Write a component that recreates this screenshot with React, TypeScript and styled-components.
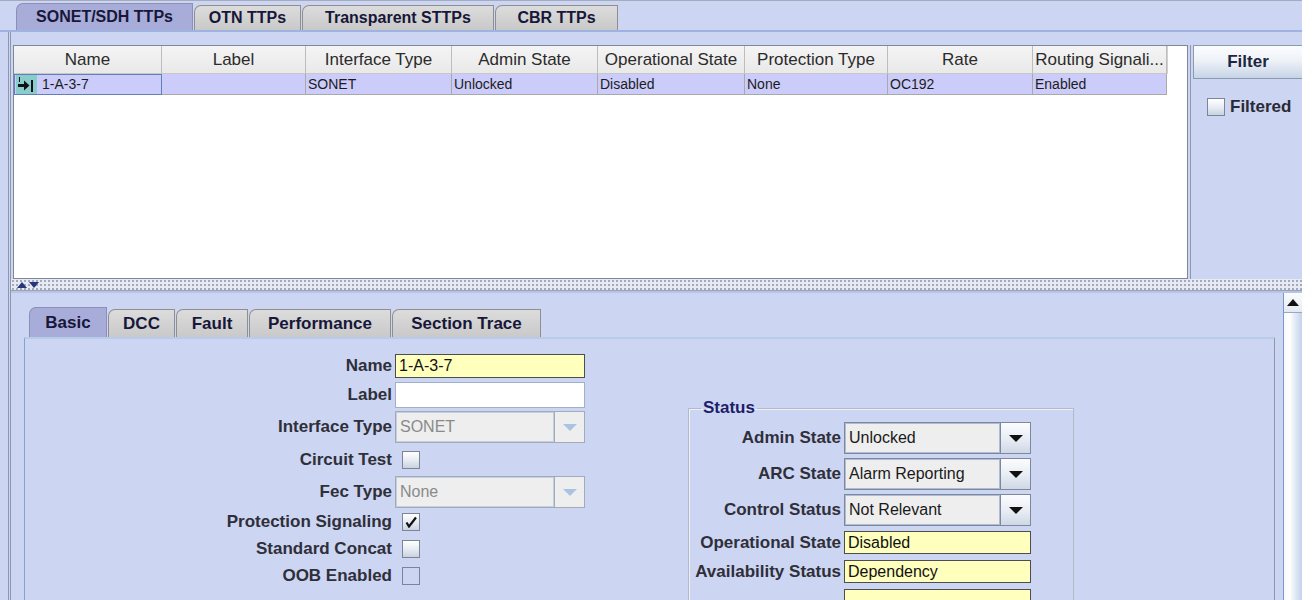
import React from "react";
import styled, { createGlobalStyle } from "styled-components";

const GlobalStyle = createGlobalStyle`
  html, body { margin: 0; padding: 0; background: #ffffff; }
  body { font-family: "Liberation Sans", Arial, sans-serif; }
  * { box-sizing: border-box; }
`;

const Frame = styled.div`
  width: 1302px;
  height: 600px;
  overflow: hidden;
  background: #ccd5f1;
  display: flex;
  flex-direction: column;
  border-top: 1px solid #a3abbd;
`;

const TopTabBar = styled.div`
  height: 31px;
  flex: none;
  display: flex;
  align-items: flex-end;
  padding-left: 16px;
  border-bottom: 2px solid #9fb2e0;
`;

const Tab = styled.div<{ $active?: boolean; $w: number; $size: number; $h: number }>`
  width: ${(p) => p.$w}px;
  height: ${(p) => (p.$active ? p.$h : p.$h - 2)}px;
  display: flex;
  align-items: center;
  justify-content: center;
  font-weight: 700;
  font-size: ${(p) => p.$size}px;
  color: #17173a;
  background: ${(p) =>
    p.$active ? "#a8acd9" : "linear-gradient(#dcdcdc, #c9c9c9)"};
  border: 1px solid ${(p) => (p.$active ? "#8c90b8" : "#8f8f8f")};
  border-bottom: none;
  border-top-left-radius: 7px;
  margin-right: 1px;
  white-space: nowrap;
`;

const TabBody = styled.div`
  flex: 1;
  display: flex;
  flex-direction: column;
  margin-left: 8px;
  padding-top: 13px;
  border-left: 3px double #8d97ae;
  min-height: 0;
`;

const UpperPane = styled.div`
  height: 234px;
  flex: none;
  display: flex;
`;

const TableScroll = styled.div`
  flex: 1;
  margin-left: 2px;
  background: #ffffff;
  border: 1px solid #7d889f;
  overflow: hidden;
`;

const TableGrid = styled.div<{ $cols: string }>`
  display: grid;
  grid-template-columns: ${(p) => p.$cols};
`;

const HeadCell = styled.div`
  height: 28px;
  display: flex;
  align-items: center;
  justify-content: center;
  font-size: 17px;
  color: #2b2b2b;
  background: linear-gradient(#f4f4f4, #e9e9e9);
  border-right: 1px solid #bdbdbd;
  border-bottom: 1px solid #c8c8c8;
  white-space: nowrap;
  overflow: hidden;
`;

const HeadFill = styled.div`
  height: 28px;
  background: #ffffff;
  border-left: 1px solid #d0d0d0;
`;

const RowCell = styled.div<{ $focus?: boolean }>`
  height: 21px;
  display: flex;
  align-items: center;
  gap: 5px;
  padding-left: 2px;
  font-size: 14px;
  color: #1c1c1c;
  background: #ccccfa;
  border-right: 1px solid #a9a9a9;
  border-bottom: 1px solid #a9a9a9;
  outline: ${(p) => (p.$focus ? "1px solid #6280b8" : "none")};
  outline-offset: -1px;
  white-space: nowrap;
`;

const RowFill = styled.div`
  height: 21px;
`;

const FilterPanel = styled.div`
  width: 112px;
  flex: none;
  border-left: 1px solid #8e98ae;
  margin-left: 2px;
  display: flex;
  flex-direction: column;
  padding-left: 2px;
`;

const FilterButton = styled.div`
  height: 34px;
  display: flex;
  align-items: center;
  justify-content: center;
  font-weight: 700;
  font-size: 17px;
  color: #1d2740;
  background: linear-gradient(#fbfcfe, #eef2f8 45%, #c7d4e6);
  border: 1px solid #8b9ab1;
  border-right: none;
`;

const CheckRow = styled.div`
  display: flex;
  align-items: center;
  gap: 5px;
  margin: 18px 0 0 14px;
  font-weight: 700;
  font-size: 17px;
  color: #2a2a36;
`;

const CheckBox = styled.div<{ $flat?: boolean }>`
  width: 18px;
  height: 18px;
  flex: none;
  display: flex;
  align-items: center;
  justify-content: center;
  border: 1px solid #7c8596;
  background: ${(p) =>
    p.$flat ? "#ccd5f1" : "linear-gradient(#ffffff, #e8edf4 50%, #c9d2df)"};
`;

const Divider = styled.div`
  height: 12px;
  flex: none;
  display: flex;
  align-items: center;
  gap: 2px;
  padding-left: 6px;
  background-color: #e7eaf2;
  background-image: radial-gradient(circle, #a3aabb 0.9px, transparent 1.2px);
  background-size: 4px 4px;
  border-bottom: 1px solid #9aa3b6;
`;

const Arrow = styled.div<{ $down?: boolean }>`
  width: 0;
  height: 0;
  border-left: 5px solid transparent;
  border-right: 5px solid transparent;
  ${(p) =>
    p.$down
      ? "border-top: 6px solid #27357a;"
      : "border-bottom: 6px solid #27357a;"}
`;

const LowerPane = styled.div`
  flex: 1;
  display: flex;
  min-height: 0;
  border-top: 2px solid #b7c4e6;
`;

const DetailArea = styled.div`
  flex: 1;
  display: flex;
  flex-direction: column;
  padding: 9px 8px 0 13px;
`;

const InnerTabBar = styled.div`
  display: flex;
  align-items: flex-end;
  padding-left: 5px;
  height: 35px;
  flex: none;
`;

const InnerBody = styled.div`
  flex: 1;
  display: flex;
  align-items: flex-start;
  padding: 12px 0 0 167px;
  border-top: 2px solid #b9cbeb;
  border-left: 1px solid #87a0d2;
  border-right: 1px solid #8f98a8;
`;

const FormGrid = styled.div<{ $rows: string; $cols: string }>`
  display: grid;
  grid-template-columns: ${(p) => p.$cols};
  grid-template-rows: ${(p) => p.$rows};
  column-gap: 3px;
  align-items: center;
`;

const FieldLabel = styled.div`
  justify-self: end;
  font-weight: 700;
  font-size: 17px;
  color: #2f2f3a;
  white-space: nowrap;
`;

const TextField = styled.div<{ $yellow?: boolean; $h: number }>`
  height: ${(p) => p.$h}px;
  display: flex;
  align-items: center;
  padding-left: 3px;
  font-size: 16px;
  color: #111;
  background: ${(p) => (p.$yellow ? "#ffffbe" : "#ffffff")};
  border: 1px solid ${(p) => (p.$yellow ? "#4d4d4d" : "#9fb0c8")};
`;

const Combo = styled.div<{ $disabled?: boolean }>`
  height: 32px;
  display: flex;
  border: 1px solid ${(p) => (p.$disabled ? "#a2abba" : "#7d889c")};
  background: #eeeeee;
`;

const ComboText = styled.div<{ $disabled?: boolean }>`
  flex: 1;
  display: flex;
  align-items: center;
  padding-left: 3px;
  font-size: 16px;
  color: ${(p) => (p.$disabled ? "#8a8a8a" : "#1a1a1a")};
  border: 1px solid ${(p) => (p.$disabled ? "#c3cede" : "#aebdd4")};
`;

const ComboButton = styled.div<{ $disabled?: boolean }>`
  width: 30px;
  flex: none;
  display: flex;
  align-items: center;
  justify-content: center;
  border-left: 1px solid ${(p) => (p.$disabled ? "#a2abba" : "#7d889c")};
  background: ${(p) =>
    p.$disabled ? "#eeeeee" : "linear-gradient(#fbfcfe, #e9eef5 50%, #cfd8e5)"};
`;

const ComboTriangle = styled.div<{ $disabled?: boolean }>`
  width: 0;
  height: 0;
  border-left: 7px solid transparent;
  border-right: 7px solid transparent;
  border-top: 7px solid ${(p) => (p.$disabled ? "#a9c4e2" : "#111")};
`;

const CheckCell = styled.div`
  padding-left: 7px;
`;

const StatusSet = styled.fieldset`
  margin: 48px 0 0 103px;
  padding: 3px 42px 0 5px;
  width: 386px;
  border: 1px solid #b3b9c9;
  box-shadow: inset 1px 1px 0 #eef0f7;
  min-height: 300px;
`;

const Legend = styled.legend`
  padding: 0 2px;
  margin-left: 7px;
  font-weight: 700;
  font-size: 17px;
  line-height: 18px;
  color: #1e1f6b;
`;

const VScroll = styled.div`
  width: 19px;
  flex: none;
  display: flex;
  flex-direction: column;
  border-left: 1px solid #7b96c8;
  background: linear-gradient(to right, #f6f9fe, #ffffff 30%, #dfe8f5 65%, #c3d3ea);
`;

const ScrollButton = styled.div`
  height: 20px;
  flex: none;
  display: flex;
  align-items: center;
  justify-content: center;
  background: linear-gradient(#fbfcfe, #e4e9f1);
  border-bottom: 1px solid #9aa9c2;
`;

const UpTriangle = styled.div`
  width: 0;
  height: 0;
  border-left: 6px solid transparent;
  border-right: 6px solid transparent;
  border-bottom: 7px solid #111;
`;

const RowIcon = () => (
  <svg width="21" height="19" viewBox="0 0 21 19">
    <rect x="0" y="0" width="21" height="19" fill="#88cccc" />
    <rect x="3" y="2" width="1" height="5" fill="#111" />
    <polygon points="2,9 8,9 8,5.5 13.5,10.5 8,15.5 8,12 2,12" fill="#111" />
    <rect x="15" y="5" width="2" height="12" fill="#111" />
  </svg>
);

const CheckMark = () => (
  <svg width="12" height="12" viewBox="0 0 12 12">
    <path d="M1.5 6.5 L4 10.5 L11 1.5" stroke="#111" strokeWidth="2.2" fill="none" />
  </svg>
);

const columns = [
  { title: "Name", w: 148 },
  { title: "Label", w: 144 },
  { title: "Interface Type", w: 146 },
  { title: "Admin State", w: 146 },
  { title: "Operational State", w: 147 },
  { title: "Protection Type", w: 143 },
  { title: "Rate", w: 145 },
  { title: "Routing Signali...", w: 134 },
];

const rowValues = ["1-A-3-7", "", "SONET", "Unlocked", "Disabled", "None", "OC192", "Enabled"];

const topTabs = [
  { label: "SONET/SDH TTPs", w: 177 },
  { label: "OTN TTPs", w: 107 },
  { label: "Transparent STTPs", w: 192 },
  { label: "CBR TTPs", w: 123 },
];

const innerTabs = [
  { label: "Basic", w: 78 },
  { label: "DCC", w: 67 },
  { label: "Fault", w: 72 },
  { label: "Performance", w: 142 },
  { label: "Section Trace", w: 149 },
];

const ComboBox = ({ value, disabled }: { value: string; disabled?: boolean }) => (
  <Combo $disabled={disabled}>
    <ComboText $disabled={disabled}>{value}</ComboText>
    <ComboButton $disabled={disabled}>
      <ComboTriangle $disabled={disabled} />
    </ComboButton>
  </Combo>
);

export default function App() {
  const colTemplate = columns.map((c) => `${c.w}px`).join(" ") + " 1fr";
  return (
    <>
      <GlobalStyle />
      <Frame>
        <TopTabBar>
          {topTabs.map((t, i) => (
            <Tab key={t.label} $active={i === 0} $w={t.w} $size={16} $h={27}>
              {t.label}
            </Tab>
          ))}
        </TopTabBar>
        <TabBody>
          <UpperPane>
            <TableScroll>
              <TableGrid $cols={colTemplate}>
                {columns.map((c) => (
                  <HeadCell key={c.title}>{c.title}</HeadCell>
                ))}
                <HeadFill />
                {rowValues.map((v, i) => (
                  <RowCell key={i} $focus={i === 0}>
                    {i === 0 && <RowIcon />}
                    {v}
                  </RowCell>
                ))}
                <RowFill />
              </TableGrid>
            </TableScroll>
            <FilterPanel>
              <FilterButton>Filter</FilterButton>
              <CheckRow>
                <CheckBox />
                Filtered
              </CheckRow>
            </FilterPanel>
          </UpperPane>
          <Divider>
            <Arrow />
            <Arrow $down />
          </Divider>
          <LowerPane>
            <DetailArea>
              <InnerTabBar>
                {innerTabs.map((t, i) => (
                  <Tab key={t.label} $active={i === 0} $w={t.w} $size={17} $h={30}>
                    {t.label}
                  </Tab>
                ))}
              </InnerTabBar>
              <InnerBody>
                <FormGrid
                  $cols="200px 190px"
                  $rows="29px 30px 34px 32px 32px 27px 27px 27px"
                >
                  <FieldLabel>Name</FieldLabel>
                  <TextField $yellow $h={24}>1-A-3-7</TextField>
                  <FieldLabel>Label</FieldLabel>
                  <TextField $h={26} />
                  <FieldLabel>Interface Type</FieldLabel>
                  <ComboBox value="SONET" disabled />
                  <FieldLabel>Circuit Test</FieldLabel>
                  <CheckCell>
                    <CheckBox />
                  </CheckCell>
                  <FieldLabel>Fec Type</FieldLabel>
                  <ComboBox value="None" disabled />
                  <FieldLabel>Protection Signaling</FieldLabel>
                  <CheckCell>
                    <CheckBox>
                      <CheckMark />
                    </CheckBox>
                  </CheckCell>
                  <FieldLabel>Standard Concat</FieldLabel>
                  <CheckCell>
                    <CheckBox />
                  </CheckCell>
                  <FieldLabel>OOB Enabled</FieldLabel>
                  <CheckCell>
                    <CheckBox $flat />
                  </CheckCell>
                </FormGrid>
                <StatusSet>
                  <Legend>Status</Legend>
                  <FormGrid $cols="147px 187px" $rows="36px 36px 36px 29px 29px 29px">
                    <FieldLabel>Admin State</FieldLabel>
                    <ComboBox value="Unlocked" />
                    <FieldLabel>ARC State</FieldLabel>
                    <ComboBox value="Alarm Reporting" />
                    <FieldLabel>Control Status</FieldLabel>
                    <ComboBox value="Not Relevant" />
                    <FieldLabel>Operational State</FieldLabel>
                    <TextField $yellow $h={23}>Disabled</TextField>
                    <FieldLabel>Availability Status</FieldLabel>
                    <TextField $yellow $h={23}>Dependency</TextField>
                    <FieldLabel />
                    <TextField $yellow $h={23} />
                  </FormGrid>
                </StatusSet>
              </InnerBody>
            </DetailArea>
            <VScroll>
              <ScrollButton>
                <UpTriangle />
              </ScrollButton>
            </VScroll>
          </LowerPane>
        </TabBody>
      </Frame>
    </>
  );
}
